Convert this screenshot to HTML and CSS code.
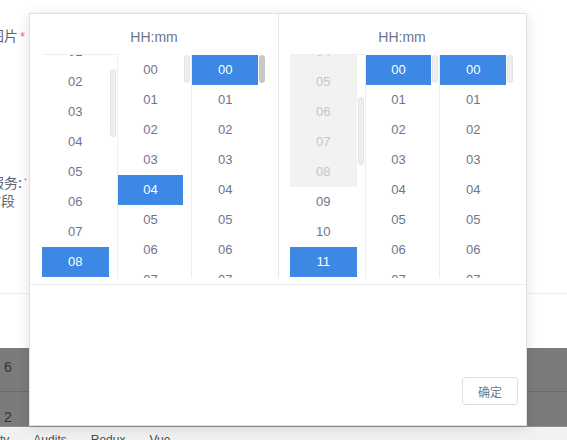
FILE: index.html
```html
<!DOCTYPE html>
<html lang="zh">
<head>
<meta charset="utf-8">
<title>Time picker</title>
<link rel="stylesheet" href="styles.css">
</head>
<body>
<div class="page">
  <div class="form">
    <div class="label label-photo"><span class="cut-a">图片</span><span class="req">*</span></div>
    <div class="label label-service">
      <div class="line cut-b">服务:<span class="req req-sm">*</span></div>
      <div class="line cut-c">时段</div>
    </div>
  </div>
  <div class="table">
    <div class="row row-a">6</div>
    <div class="row row-b">2</div>
  </div>
  <div class="tabs">
    <span class="tab">Security</span>
    <span class="tab">Audits</span>
    <span class="tab">Redux</span>
    <span class="tab">Vue</span>
  </div>
</div>

<div class="picker">
  <div class="panels">
    <div class="panel">
      <div class="panel-title">HH:mm</div>
      <div class="spinner">
        <div class="col col-hours">
          <ul class="list off-left">
            <li>00</li><li>01</li><li>02</li><li>03</li><li>04</li><li>05</li><li>06</li><li>07</li>
            <li class="active">08</li><li>09</li><li>10</li>
          </ul>
          <div class="track"><div class="thumb thumb-long off-14"></div></div>
        </div>
        <div class="col">
          <ul class="list">
            <li>00</li><li>01</li><li>02</li><li>03</li><li class="active">04</li><li>05</li><li>06</li><li>07</li><li>08</li>
          </ul>
          <div class="track"><div class="thumb"></div></div>
        </div>
        <div class="col">
          <ul class="list">
            <li class="active">00</li><li>01</li><li>02</li><li>03</li><li>04</li><li>05</li><li>06</li><li>07</li><li>08</li>
          </ul>
          <div class="track"><div class="thumb thumb-dark"></div></div>
        </div>
      </div>
    </div>
    <div class="panel panel-right">
      <div class="panel-title">HH:mm</div>
      <div class="spinner">
        <div class="col col-hours">
          <ul class="list off-right">
            <li class="disabled">00</li><li class="disabled">01</li><li class="disabled">02</li><li class="disabled">03</li>
            <li class="disabled">04</li><li class="disabled">05</li><li class="disabled">06</li><li class="disabled">07</li>
            <li class="disabled">08</li><li>09</li><li>10</li><li class="active">11</li><li>12</li><li>13</li>
          </ul>
          <div class="track"><div class="thumb thumb-long off-42"></div></div>
        </div>
        <div class="col">
          <ul class="list">
            <li class="active">00</li><li>01</li><li>02</li><li>03</li><li>04</li><li>05</li><li>06</li><li>07</li><li>08</li>
          </ul>
          <div class="track"><div class="thumb"></div></div>
        </div>
        <div class="col">
          <ul class="list">
            <li class="active">00</li><li>01</li><li>02</li><li>03</li><li>04</li><li>05</li><li>06</li><li>07</li><li>08</li>
          </ul>
          <div class="track"><div class="thumb"></div></div>
        </div>
      </div>
    </div>
  </div>
  <div class="footer">
    <button class="btn" type="button">确定</button>
  </div>
</div>
</body>
</html>
```

FILE: styles.css
```css
* { box-sizing: border-box; }
html, body { margin: 0; padding: 0; }
body {
  width: 567px;
  height: 440px;
  overflow: hidden;
  background: #ffffff;
  font-family: "Liberation Sans", "Noto Sans CJK SC", sans-serif;
  position: relative;
}

.page {
  display: flex;
  flex-direction: column;
  height: 440px;
}

.form {
  flex: 0 0 294px;
  height: 294px;
  padding-top: 25px;
  border-bottom: 1px solid #ebeef5;
  font-family: "Noto Sans CJK SC", "Liberation Sans", sans-serif;
  font-size: 14px;
  color: #5f6470;
}
.label { line-height: 20px; white-space: nowrap; }
.cut-a { margin-left: -10px; }
.req {
  color: #f56c6c;
  margin-left: 2px;
  font-family: "Liberation Sans", sans-serif;
  font-size: 13px;
}
.req-sm { font-size: 8px; vertical-align: 5px; margin-left: 2px; }
.label-service { margin-top: 125px; }
.label-service .line { line-height: 18px; }
.cut-b { margin-left: -10px; }
.cut-c { margin-left: -13px; }

.table {
  flex: 0 0 auto;
  margin-top: 54px;
  background: #7b7b7b;
  color: #2f333b;
  font-size: 14px;
}
.row { line-height: 16px; padding-left: 4px; }
.row-a { height: 44px; padding-top: 11px; border-bottom: 1px solid #6b6b6b; }
.row-b { height: 34px; padding-top: 17px; }

.tabs {
  flex: 1 1 auto;
  min-height: 0;
  overflow: hidden;
  display: flex;
  align-items: flex-start;
  background: #f1f1f1;
  border-top: 1px solid #8e8e8e;
  padding-top: 6px;
  font-size: 12px;
  line-height: 14px;
  color: #4a4a4a;
  white-space: nowrap;
  margin-left: -46px;
}
.tab { padding: 0 12px; }

/* Time picker popup (overlay) */
.picker {
  position: absolute;
  top: 13px;
  left: 29px;
  width: 498px;
  height: 413px;
  background: #ffffff;
  border: 1px solid #e0e0e0;
  box-shadow: 0 2px 12px rgba(0, 0, 0, 0.12);
  display: flex;
  flex-direction: column;
}
.panels {
  display: flex;
  border-bottom: 1px solid #ececec;
  padding-bottom: 6px;
}
.panel {
  flex: 0 0 248px;
  padding: 0 12px;
}
.panel-right {
  flex: 0 0 248px;
  border-left: 1px solid #e8e8e8;
  padding-left: 11px;
}
.panel-title {
  padding-top: 6px;
  line-height: 34px;
  text-align: center;
  font-size: 14px;
  color: #6b778c;
}
.spinner {
  display: grid;
  grid-template-columns: 1fr 1fr 1fr;
  height: 224px;
}
.col {
  display: flex;
  overflow: hidden;
  height: 224px;
  border-top: 1px solid transparent;
  border-left: 1px solid #eeeeee;
}
.col-hours {
  border-left: none;
  border-top-color: #eeeeee;
}
.list {
  flex: 1;
  list-style: none;
  margin: 0;
  padding: 0;
}
.list li {
  height: 30px;
  line-height: 30px;
  text-align: center;
  font-size: 13px;
  color: #6b778c;
}
.list li.active { background: #3d88e4; color: #ffffff; }
.list li.disabled { background: #f2f2f2; color: #c6c6c6; }
.off-left { margin-top: -48px; }
.off-right { margin-top: -138px; }

.track { flex: 0 0 8px; padding: 0 1px; }
.thumb {
  height: 28px;
  border-radius: 4px;
  background: #eeeeee;
  border: 1px solid #e3e3e3;
}
.thumb-dark { background: #c9c9c9; border-color: #c4c4c4; }
.thumb-long { height: 68px; }
.off-14 { margin-top: 14px; }
.off-42 { margin-top: 42px; }

.footer {
  flex: 1;
  display: flex;
  justify-content: flex-end;
  align-items: flex-end;
  padding: 0 8px 20px 0;
}
.btn {
  width: 56px;
  height: 28px;
  padding: 0;
  background: #ffffff;
  border: 1px solid #dcdfe6;
  border-radius: 3px;
  font-family: "Noto Sans CJK SC", sans-serif;
  font-size: 12px;
  color: #6b778c;
}
```
